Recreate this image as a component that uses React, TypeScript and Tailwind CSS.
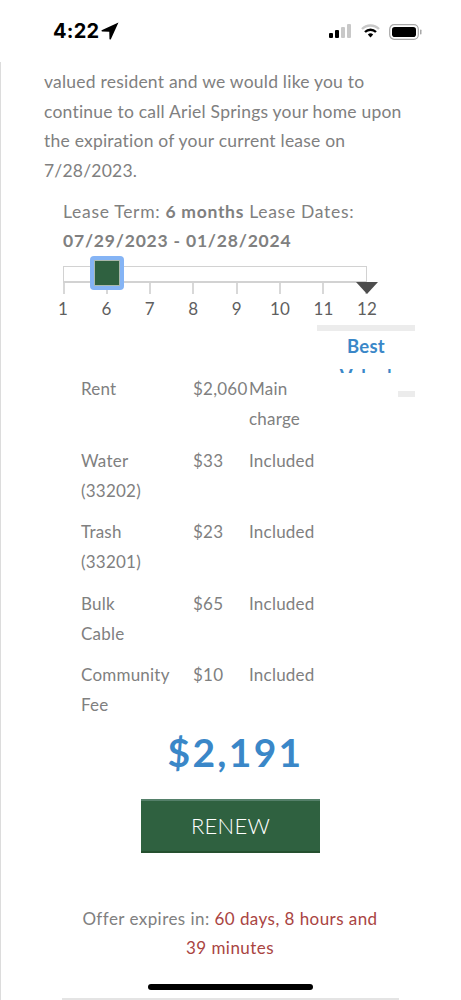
const TICKS = ["1", "6", "7", "8", "9", "10", "11", "12"];

const CHARGES = [
  { name: "Rent", amount: "$2,060", note: "Main charge" },
  { name: "Water (33202)", amount: "$33", note: "Included" },
  { name: "Trash (33201)", amount: "$23", note: "Included" },
  { name: "Bulk Cable", amount: "$65", note: "Included" },
  { name: "Community Fee", amount: "$10", note: "Included" },
];

function StatusBar() {
  return (
    <div className="h-[62px] bg-white flex items-start justify-between pl-[53px] pr-[39px] pt-[20px]">
      <div className="flex items-center gap-[2px] text-black">
        <span className="text-[20px] leading-[22px] font-bold font-['Inter',sans-serif]">4:22</span>
        <svg width="18" height="18" viewBox="0 0 17 17" fill="currentColor">
          <path d="M16.5 .5 L.6 7.8 Q0 8.8 1 9 L7.8 9.2 L8 16 Q8.6 17 9.3 16.2 Z" />
        </svg>
      </div>
      <div className="flex items-center gap-[9px] h-[22px] pt-[1px]">
        <svg width="23" height="15" viewBox="0 0 23 15">
          <rect x="0" y="9" width="4" height="5" rx="1" fill="#000" />
          <rect x="6" y="6" width="4" height="8" rx="1" fill="#000" />
          <rect x="12" y="3" width="4" height="11" rx="1" fill="#c8c8c8" />
          <rect x="18" y="0" width="4" height="14" rx="1" fill="#c8c8c8" />
        </svg>
        <svg width="19" height="15" viewBox="0 0 19 15">
          <path d="M1 5 A12 12 0 0 1 18 5" fill="none" stroke="#c8c8c8" strokeWidth="2.4" />
          <path d="M4 8 A8 8 0 0 1 15 8" fill="none" stroke="#000" strokeWidth="2.4" />
          <path d="M6.8 10.6 A4 4 0 0 1 12.2 10.6 L9.5 13.6 Z" fill="#000" />
        </svg>
        <svg width="33" height="16" viewBox="0 0 33 16">
          <rect x="0.7" y="0.7" width="28.6" height="14.6" rx="4.5" fill="none" stroke="#a8a8a8" strokeWidth="1.2" />
          <rect x="3" y="3" width="24" height="10" rx="2.8" fill="#000" />
          <rect x="31" y="5.5" width="1.5" height="5" rx="0.7" fill="#a8a8a8" />
        </svg>
      </div>
    </div>
  );
}

function LeaseSlider() {
  return (
    <div className="relative ml-[63px] w-[304px] h-[28px]">
      <div className="h-[17px] border border-b-2 border-[#d2d2d2]" />
      <div className="flex justify-between h-[11px]">
        {TICKS.map((t) => (
          <div key={t} className="w-[2px] bg-[#d8d8d8]" />
        ))}
      </div>
      <div className="absolute left-[27px] top-[-10px] w-[34px] h-[34px] rounded-[4px] bg-[#85b4f5] p-[4px]">
        <div className="w-full h-full bg-[#2f6140] border border-[#a9b8ad]" />
      </div>
      <div className="absolute right-[-11px] top-[16px] w-0 h-0 border-l-[11px] border-r-[11px] border-t-[12px] border-l-transparent border-r-transparent border-t-[#4d4d4d]" />
      <div className="absolute left-0 right-0 top-[31px] flex justify-between text-[17px] leading-[24px] text-[#5f5f5f] tracking-[0.2px]">
        {TICKS.map((t) => (
          <div key={t} className="w-0 flex justify-center">
            {t}
          </div>
        ))}
      </div>
    </div>
  );
}

export default function App() {
  return (
    <div className="relative h-[1000px] w-[461px] overflow-hidden bg-white font-['Lato',sans-serif] text-[#808080] tracking-[0.22px]">
      <StatusBar />
      <div className="border-l border-[#dcdcdc] h-[938px] overflow-hidden">
        <p className="ml-[43px] mt-[5px] w-[380px] text-[17.5px] leading-[29.6px]">
          valued resident and we would like you to
          <br />
          continue to call Ariel Springs your home upon
          <br />
          the expiration of your current lease on
          <br />
          7/28/2023.
        </p>

        <div className="ml-[62px] mt-[12px] text-[17.5px] leading-[29px] tracking-[0.7px]">
          <div>
            Lease Term: <b>6 months</b> Lease Dates:
          </div>
          <div className="font-bold tracking-[0.8px]">07/29/2023 - 01/28/2024</div>
        </div>

        <div className="ml-[-1px] mt-[11px]">
          <LeaseSlider />
        </div>

        {/* best value tab gets cut off in the original too */}
        <div className="relative h-[95px]">
          <div className="absolute left-[316px] top-[31px] w-[98px] h-[48px] overflow-hidden border-t-[6px] border-[#ececec] text-center text-[#3a87c8] font-bold text-[18.5px] leading-[30px]">
            Best
            <br />
            Value!
          </div>
          <div className="absolute left-[397px] top-[97px] w-[17px] h-[6px] bg-[#ececec]" />
        </div>

        <div className="ml-[80px] mt-[-15px] text-[17px] leading-[29.7px]">
          {CHARGES.map((c) => (
            <div key={c.name} className="grid grid-cols-[112px_56px_90px] h-[71.5px]">
              <div className="w-min">{c.name}</div>
              <div>{c.amount}</div>
              <div>{c.note}</div>
            </div>
          ))}
        </div>

        <div className="mt-[-3px] ml-[-1px] pl-[10px] text-center text-[39px] leading-[46px] font-bold tracking-[2.3px] text-[#3a87c8]">
          $2,191
        </div>

        <button className="block ml-[140px] mt-[24px] w-[179px] h-[54px] bg-[#2f6140] border-t-2 border-t-[#55806a] border-b-2 border-b-[#25502f] text-white text-[22px] font-light">
          RENEW
        </button>

        <p className="mt-[51px] w-[310px] ml-[74px] text-center text-[17px] leading-[29.5px] tracking-[0.45px]">
          Offer expires in: <span className="text-[#a94442]">60 days, 8 hours and 39 minutes</span>
        </p>
      </div>
      <div className="absolute left-[62px] right-[62px] top-[998px] h-[2px] bg-[#e4e4e4]" />
      <div className="absolute left-[148px] top-[984px] w-[165px] h-[6px] rounded-full bg-black" />
    </div>
  );
}
